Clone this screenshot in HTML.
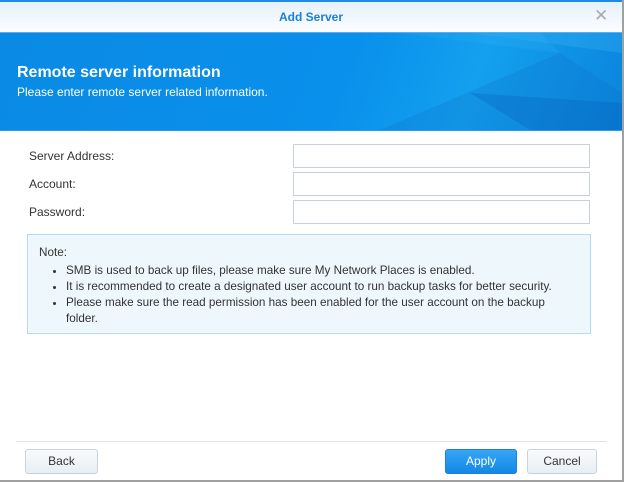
<!DOCTYPE html>
<html><head><style>
body{margin:0;width:624px;height:482px;overflow:hidden;background:#fff;font-family:"Liberation Sans",sans-serif;position:relative}
.a{position:absolute}
.inp{position:absolute;left:293px;width:295px;height:22px;border:1px solid #c8d0d8;background:#fff}
.lbl{position:absolute;left:29px;font-size:12px;color:#333}
.btn{position:absolute;top:449px;height:23px;border:1px solid #c8d3de;border-radius:3px;background:linear-gradient(#f8fafc,#e8eef4);font-size:12px;color:#333;text-align:center;line-height:23px}
li{margin:0}
</style></head><body>
<div class="a" style="left:0;top:0;width:624px;height:2px;background:#1a8be8"></div>
<div class="a" style="left:0;top:2px;width:622px;height:30px;background:linear-gradient(#e6f1fa,#fbfdff);border-bottom:1px solid #5aaef0"></div>
<div class="a" style="left:0;top:10px;width:622px;text-align:center;font-size:12px;font-weight:bold;color:#1a7fd8">Add Server</div>
<div class="a" style="left:594px;top:6px;font-size:17px;color:#aaa">✕</div>
<div class="a" style="left:0;top:33px;width:622px;height:97px;background:linear-gradient(110deg,#0a8ae4 0%,#0990ec 55%,#14a0ee 75%,#0a84dc 100%);overflow:hidden">
<svg width="622" height="97" style="position:absolute;left:0;top:0"><polygon points="470,0 622,0 622,20" fill="#3ab4f4" opacity=".3"/><polygon points="380,97 560,20 622,60 622,97" fill="#0a70c8" opacity=".25"/><polygon points="470,60 530,97 622,97 622,70" fill="#0660b8" opacity=".3"/><polygon points="400,0 560,20 540,0" fill="#30b0f4" opacity=".25"/></svg>
</div>
<div class="a" style="left:17px;top:64px;font-size:16px;font-weight:bold;color:#fff">Remote server information</div>
<div class="a" style="left:17px;top:85px;font-size:12px;color:#fff">Please enter remote server related information.</div>
<div class="a" style="left:0;top:130px;width:622px;height:1px;background:#2a9af0"></div>
<div class="lbl" style="top:149px">Server Address:</div>
<div class="lbl" style="top:177px">Account:</div>
<div class="lbl" style="top:205px">Password:</div>
<div class="inp" style="top:144px"></div>
<div class="inp" style="top:172px"></div>
<div class="inp" style="top:200px"></div>
<div class="a" style="left:27px;top:234px;width:562px;height:98px;border:1px solid #b8dcef;background:#eef7fc;font-size:11.7px;color:#333;line-height:16px">
<div style="margin:10px 0 0 11px">Note:</div>
<ul style="margin:2px 0 0 0;padding-left:38px;padding-right:18px">
<li>SMB is used to back up files, please make sure My Network Places is enabled.</li>
<li>It is recommended to create a designated user account to run backup tasks for better security.</li>
<li>Please make sure the read permission has been enabled for the user account on the backup folder.</li>
</ul></div>
<div class="a" style="left:16px;top:441px;width:591px;height:1px;background:#dde3e8"></div>
<div class="btn" style="left:25px;width:71px">Back</div>
<div class="btn" style="left:445px;width:70px;background:linear-gradient(#36a6f4,#1287e6);border-color:#1a80d8;color:#fff">Apply</div>
<div class="btn" style="left:527px;width:68px">Cancel</div>
<div class="a" style="left:622px;top:0;width:2px;height:482px;background:#a0a0a0"></div>
<div class="a" style="left:0;top:480px;width:624px;height:2px;background:#a0a0a0"></div>
</body></html>
